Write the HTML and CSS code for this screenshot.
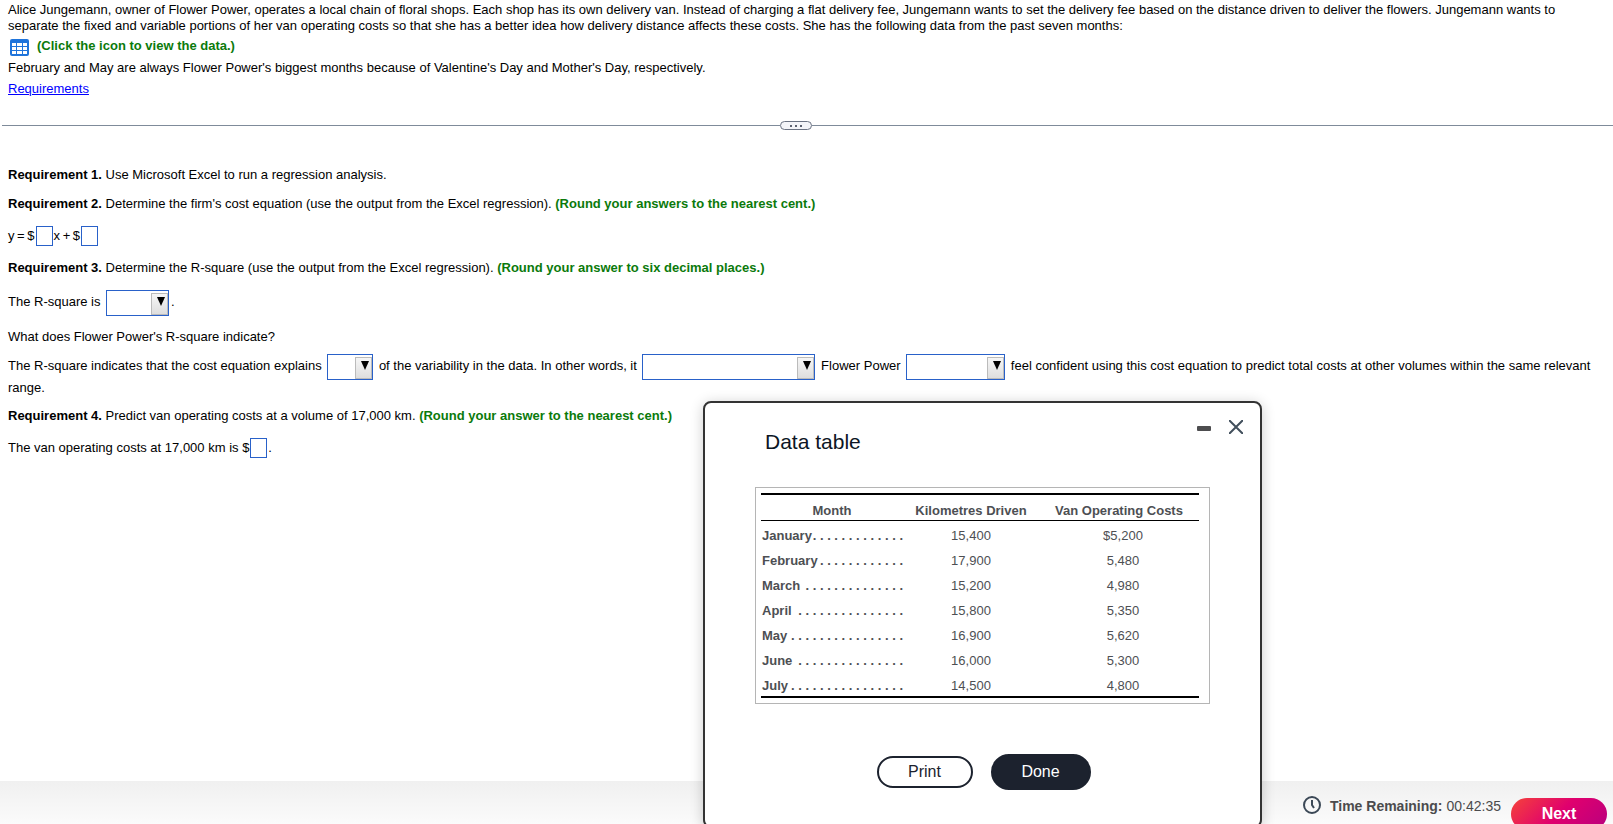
FILE: index.html
```
<!DOCTYPE html>
<html lang="en">
<head>
  <meta charset="UTF-8">
  <title>Flower Power</title>
  <link rel="stylesheet" href="styles.css">
</head>
<body>

  <!-- Problem statement -->
  <section class="problem">
    <p>Alice Jungemann, owner of Flower Power, operates a local chain of floral shops. Each shop has its own delivery van. Instead of charging a flat delivery fee, Jungemann wants to set the delivery fee based on the distance driven to deliver the flowers. Jungemann wants to separate the fixed and variable portions of her van operating costs so that she has a better idea how delivery distance affects these costs. She has the following data from the past seven months:</p>
    <div class="data-row">
      <button class="icon-btn" aria-label="View the data">
        <svg width="19" height="17" viewBox="0 0 19 17">
          <rect width="19" height="17" rx="2" fill="#1f74db"/>
          <g fill="#fff">
            <rect x="2" y="4" width="4" height="3"/><rect x="7" y="4" width="5" height="3"/><rect x="13" y="4" width="4" height="3"/>
            <rect x="2" y="8" width="4" height="3"/><rect x="7" y="8" width="5" height="3"/><rect x="13" y="8" width="4" height="3"/>
            <rect x="2" y="12" width="4" height="3"/><rect x="7" y="12" width="5" height="3"/><rect x="13" y="12" width="4" height="3"/>
          </g>
        </svg>
      </button>
      <span class="hint">(Click the icon to view the data.)</span>
    </div>
    <p class="note">February and May are always Flower Power's biggest months because of Valentine's Day and Mother's Day, respectively.</p>
    <p class="note"><a href="#requirements">Requirements</a></p>
  </section>

  <!-- Splitter -->
  <div class="splitter">
    <button class="handle" aria-label="Resize"><i></i><i></i><i></i></button>
  </div>

  <!-- Questions -->
  <main class="questions" id="requirements">
    <p><b>Requirement 1.</b> Use Microsoft Excel to run a regression analysis.</p>
    <p><b>Requirement 2.</b> Determine the firm's cost equation (use the output from the Excel regression). <span class="hint">(Round your answers to the nearest cent.)</span></p>
    <p class="equation">
      <label for="slope">y&thinsp;=&thinsp;$</label><input class="blank" id="slope" type="text">
      <label for="fixed">x&thinsp;+&thinsp;$</label><input class="blank" id="fixed" type="text">
    </p>
    <p><b>Requirement 3.</b> Determine the R-square (use the output from the Excel regression). <span class="hint">(Round your answer to six decimal places.)</span></p>
    <p class="answer">
      <label for="rsquare">The R-square is</label>
      <span class="drop drop-m"><select id="rsquare"><option></option></select></span>.
    </p>
    <p class="ask">What does Flower Power's R-square indicate?</p>
    <p class="sentence">
      <label for="explains">The R-square indicates that the cost equation explains</label>
      <span class="drop drop-s"><select id="explains"><option></option></select></span>
      <label for="means">of the variability in the data. In other words, it</label>
      <span class="drop drop-xl"><select id="means"><option></option></select></span>
      <label for="confident">Flower Power</label>
      <span class="drop drop-l"><select id="confident"><option></option></select></span>
      feel confident using this cost equation to predict total costs at other volumes within the same relevant range.
    </p>
    <p><b>Requirement 4.</b> Predict van operating costs at a volume of 17,000 km. <span class="hint">(Round your answer to the nearest cent.)</span></p>
    <p class="equation">
      <label for="total">The van operating costs at 17,000 km is $</label><input class="blank" id="total" type="text"><span>.</span>
    </p>
  </main>

  <!-- Bottom bar -->
  <footer class="bar">
    <svg class="clock" width="18" height="18" viewBox="0 0 18 18" fill="none" stroke="#3b4856" stroke-width="2">
      <circle cx="9" cy="9" r="8"/>
      <path d="M9 4v5l2 3"/>
    </svg>
    <b class="time-label">Time Remaining:</b>
    <span class="time">00:42:35</span>
    <button class="next">Next</button>
  </footer>

  <!-- Data table window -->
  <div class="dialog" role="dialog" aria-labelledby="dialogTitle">
    <div class="controls">
      <button class="icon-btn" aria-label="Minimize">
        <svg width="14" height="14" viewBox="0 0 14 14"><rect y="6" width="14" height="5" rx="1" fill="#4d4d4f"/></svg>
      </button>
      <button class="icon-btn" aria-label="Close">
        <svg width="14" height="14" viewBox="0 0 14 14" stroke="#414f5c" stroke-width="2"><path d="M0 0l14 14M14 0L0 14"/></svg>
      </button>
    </div>
    <h2 id="dialogTitle">Data table</h2>
    <div class="table-box">
      <table>
        <thead>
          <tr><th class="month">Month</th><th class="km">Kilometres Driven</th><th class="cost">Van Operating Costs</th></tr>
        </thead>
        <tbody>
          <tr><th><div>January<span>. . . . . . . . . . . . .</span></div></th><td>15,400</td><td>$5,200</td></tr>
          <tr><th><div>February<span>. . . . . . . . . . . .</span></div></th><td>17,900</td><td>5,480</td></tr>
          <tr><th><div>March<span>. . . . . . . . . . . . . .</span></div></th><td>15,200</td><td>4,980</td></tr>
          <tr><th><div>April<span>. . . . . . . . . . . . . . .</span></div></th><td>15,800</td><td>5,350</td></tr>
          <tr><th><div>May<span>. . . . . . . . . . . . . . . .</span></div></th><td>16,900</td><td>5,620</td></tr>
          <tr><th><div>June<span>. . . . . . . . . . . . . . .</span></div></th><td>16,000</td><td>5,300</td></tr>
          <tr><th><div>July<span>. . . . . . . . . . . . . . . .</span></div></th><td>14,500</td><td>4,800</td></tr>
        </tbody>
      </table>
    </div>
    <div class="actions">
      <button class="print">Print</button>
      <button class="done">Done</button>
    </div>
  </div>

</body>
</html>
```
FILE: styles.css
```
* {
  box-sizing: border-box;
}

body {
  margin: 0;
  min-height: 100vh;
  display: flex;
  flex-direction: column;
  position: relative;
  overflow: hidden;
  background: #fff;
  color: #000;
  font-family: "Liberation Sans", Arial, sans-serif;
  font-size: 13px;
  line-height: 16px;
}

p {
  margin: 0;
}

button {
  font-family: inherit;
  cursor: pointer;
}

.icon-btn {
  display: flex;
  padding: 0;
  border: none;
  background: none;
}

.hint {
  color: #0b7a0b;
  font-weight: bold;
}

/* Problem statement */
.problem {
  padding: 2px 8px 0;
}

.data-row {
  display: flex;
  align-items: flex-start;
  gap: 8px;
  margin-top: 4px;
  padding-left: 2px;
}

.data-row .icon-btn {
  margin-top: 1px;
}

.note {
  margin-bottom: 5px;
}

.data-row + .note {
  margin-top: 4px;
}

a {
  color: #0000ff;
}

/* Splitter */
.splitter {
  display: flex;
  align-items: center;
  margin: 19px 0 0 2px;
}

.splitter::before,
.splitter::after {
  content: "";
  height: 1px;
  background: #7f8b9a;
  flex: 1;
}

.splitter::before {
  flex: 0 0 calc(50% - 28px);
}

.handle {
  display: flex;
  align-items: center;
  justify-content: center;
  gap: 3px;
  width: 32px;
  height: 9px;
  padding: 0;
  border: 1px solid #6a7282;
  border-radius: 5px;
  background: #f3f4f8;
}

.handle i {
  width: 2px;
  height: 2px;
  background: #5c6270;
}

/* Questions */
.questions {
  flex: 1;
  padding: 37px 8px 0;
}

.questions p {
  margin-bottom: 13px;
}

.questions .answer {
  margin-top: 14px;
}

.questions .equation {
  display: flex;
  align-items: center;
  gap: 1px;
  margin: 14px 0;
}

.questions .ask {
  margin-bottom: 9px;
}

.blank {
  width: 17px;
  height: 20px;
  padding: 0;
  border: 1px solid #2961c9;
  background: #fff;
}

.drop {
  display: inline-block;
  position: relative;
  height: 26px;
  margin: 0 2px;
  vertical-align: middle;
}

.drop-s { width: 46px; }
.drop-m { width: 63px; }
.drop-l { width: 99px; }
.drop-xl { width: 173px; }

.drop select {
  display: block;
  appearance: none;
  width: 100%;
  height: 100%;
  border: 1px solid #2961c9;
  border-radius: 0;
  background: #fff;
}

/* arrow button inside the drop-down */
.drop::before {
  content: "";
  position: absolute;
  top: 3px;
  right: 1px;
  width: 15px;
  height: 20px;
  border: 1px solid #bbb;
  background: linear-gradient(#f6f6f6, #dedede);
  pointer-events: none;
}

.drop::after {
  content: "";
  position: absolute;
  top: 7px;
  right: 4px;
  border: 4px solid transparent;
  border-top: 9px solid #000;
  border-bottom: none;
  pointer-events: none;
}

.questions .sentence {
  margin-bottom: 12px;
}

/* Bottom bar */
.bar {
  display: flex;
  align-items: flex-start;
  height: 43px;
  padding: 15px 6px 0 0;
  justify-content: flex-end;
  background: linear-gradient(#f0f0f0, #fbfbfb);
  color: #4b4b4d;
  font-size: 14px;
  line-height: 20px;
}

.time-label {
  margin: 0 4px 0 9px;
}

.next {
  width: 96px;
  height: 32px;
  margin: 2px 0 0 10px;
  padding: 0;
  flex: none;
  border: none;
  border-radius: 16px;
  background: linear-gradient(135deg, #f5433a 0%, #e0006e 50%, #b8007f 100%);
  color: #fff;
  font-size: 16px;
  font-weight: bold;
}

/* Data table window */
.dialog {
  position: absolute;
  left: 703px;
  top: 401px;
  width: 559px;
  padding: 17px 17px 36px 50px;
  border: 2px solid #333;
  border-radius: 8px;
  background: #fff;
  box-shadow: 0 2px 14px rgba(0, 0, 0, 0.2);
  color: #4d4f53;
}

.controls {
  display: flex;
  justify-content: flex-end;
  gap: 18px;
}

h2 {
  margin: -4px 0 0 10px;
  color: #0c1524;
  font-size: 21px;
  font-weight: normal;
  line-height: 24px;
}

.table-box {
  width: 455px;
  margin-top: 33px;
  padding: 5px 10px 5px 5px;
  border: 1px solid #b5b5b5;
}

table {
  width: 438px;
  border-collapse: separate;
  border-spacing: 0;
  border-top: 2px solid #000;
  border-bottom: 2px solid #000;
}

th,
td {
  height: 25px;
  padding: 5px 0 0;
  text-align: center;
}

thead th {
  height: 26px;
  padding-top: 6px;
  border-bottom: 1px solid #000;
}

.month { width: 142px; }
.km { width: 136px; }
.cost { width: 160px; }

td:last-child {
  padding-left: 8px;
}

tbody th div {
  display: flex;
  justify-content: space-between;
  padding-left: 1px;
}

.actions {
  display: flex;
  align-items: center;
  justify-content: center;
  gap: 18px;
  margin-top: 50px;
  padding-right: 31px;
}

.actions button {
  padding: 0;
  border: 2px solid #1c222e;
  border-radius: 18px;
  font-size: 16px;
}

.print {
  width: 96px;
  height: 32px;
  background: #fff;
  color: #1c222e;
}

.done {
  width: 100px;
  height: 36px;
  background: #1c222e;
  color: #fff;
}
```
